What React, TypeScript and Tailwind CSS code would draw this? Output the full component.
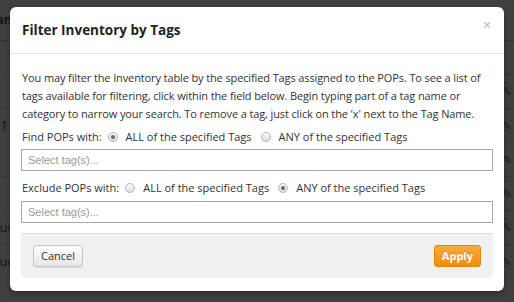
import { X } from 'lucide-react'

const rows = [
  { left: '', mid: '', tag: false },
  { left: '', mid: '', tag: false },
  { left: '2013-04-01 10:00', mid: '', tag: false },
  { left: '', mid: '', tag: false },
  { left: '', mid: '', tag: false },
  { left: 'AlbuquerqueHilton', mid: '', tag: false },
  { left: 'AlbuquerqueEmbassySuites', mid: 'ContactUnknown', tag: true },
]

function Radio({ checked }: { checked?: boolean }) {
  return (
    <span className="inline-flex h-[10px] w-[10px] shrink-0 items-center justify-center rounded-full border border-[#b5b5b5] bg-gradient-to-b from-[#fafafa] to-[#dcdcdc]">
      {checked && <span className="h-[4px] w-[4px] rounded-full bg-[#666]" />}
    </span>
  )
}

function TagRow({ label, all }: { label: string; all: boolean }) {
  return (
    <div className="flex h-[18px] items-center text-[11px] text-[#333]">
      <span className="mr-[6px]">{label}</span>
      <Radio checked={all} />
      <span className="ml-[8px] mr-[9px]">ALL of the specified Tags</span>
      <Radio checked={!all} />
      <span className="ml-[8px]">ANY of the specified Tags</span>
    </div>
  )
}

function TagInput() {
  return (
    <div className="flex h-[22px] items-center border border-[#a9a9a9] bg-white pl-[6px] font-['Liberation_Sans',Arial,sans-serif] text-[11px] text-[#999]">
      Select tag(s)...
    </div>
  )
}

export default function App() {
  return (
    <div className="relative h-[302px] w-[514px] overflow-hidden bg-white font-['Open_Sans',sans-serif]">
      {/* Inventory table behind the dialog */}
      <div className="flex h-[41px] items-center border-b border-[#ccc] px-[2px] text-[13px] font-semibold text-[#333]">
        <span className="-ml-[48px]">Timestamp</span>
      </div>
      {rows.map((r, i) => (
        <div key={i} className="grid h-[34px] grid-cols-[188px_164px_1fr] border-b border-[#ddd] text-[13px]">
          <div className="flex items-center overflow-hidden whitespace-nowrap">
            <span className={i > 4 ? '-ml-[20px] text-[#2a6eb8]' : '-ml-[60px] text-[#333]'}>{r.left}</span>
          </div>
          <div className="flex items-center border-l border-[#ddd] pl-[6px]">
            {r.tag && (
              <span className="rounded-[6px] bg-[#b3131d] px-[8px] py-[2px] text-[12px] font-bold text-white">{r.mid}</span>
            )}
          </div>
          <div className="flex items-center justify-end border-l border-[#ddd] pr-[2px] text-[#777]">
            {i > 0 && <span className="text-[12px]">✎</span>}
          </div>
        </div>
      ))}

      {/* Overlay + dialog */}
      <div className="absolute inset-0 bg-black/75">
        <div className="absolute left-[10px] top-[7px] flex w-[494px] flex-col rounded-[6px] bg-white shadow-[0_3px_7px_rgba(0,0,0,0.3)]">
          <div className="flex h-[47px] shrink-0 items-center justify-between border-b border-[#e5e5e5] pl-[12px] pr-[12px]">
            <h3 className="text-[13.5px] font-bold text-[#222]">Filter Inventory by Tags</h3>
            <X className="-mt-[10px] h-[10px] w-[10px] text-[#c8c8c8]" strokeWidth={3.5} />
          </div>

          <div className="flex flex-col px-[11px] pb-[13px] pt-[15px]">
            <p className="pl-[1px] text-[11px] leading-[18px] tracking-[-0.12px] text-[#333]">
              You may filter the Inventory table by the specified Tags assigned to the POPs. To see a list of tags
              available for filtering, click within the field below. Begin typing part of a tag name or category to
              narrow your search. To remove a tag, just click on the 'x' next to the Tag Name.
            </p>

            <div className="mt-[5px] pl-[1px]">
              <TagRow label="Find POPs with:" all />
            </div>
            <div className="mt-[3px]">
              <TagInput />
            </div>

            <div className="mt-[8px] pl-[1px]">
              <TagRow label="Exclude POPs with:" all={false} />
            </div>
            <div className="mt-[4px]">
              <TagInput />
            </div>

            <div className="mt-[10px] flex h-[45px] items-center justify-between rounded-b-[6px] border-t border-[#ddd] bg-[#f1f1f1] px-[12px]">
              <button className="h-[22px] rounded-[3px] border border-[#c5c5c5] bg-gradient-to-b from-white to-[#e6e6e6] px-[7px] text-[11px] text-[#333] shadow-[0_1px_1px_rgba(0,0,0,0.08)]">
                Cancel
              </button>
              <button className="h-[22px] rounded-[3px] border border-[#e3870c] bg-gradient-to-b from-[#fbab3a] to-[#f08c10] px-[7px] text-[11px] font-bold text-white [text-shadow:0_-1px_0_rgba(0,0,0,0.2)]">
                Apply
              </button>
            </div>
          </div>
        </div>
      </div>
    </div>
  )
}
